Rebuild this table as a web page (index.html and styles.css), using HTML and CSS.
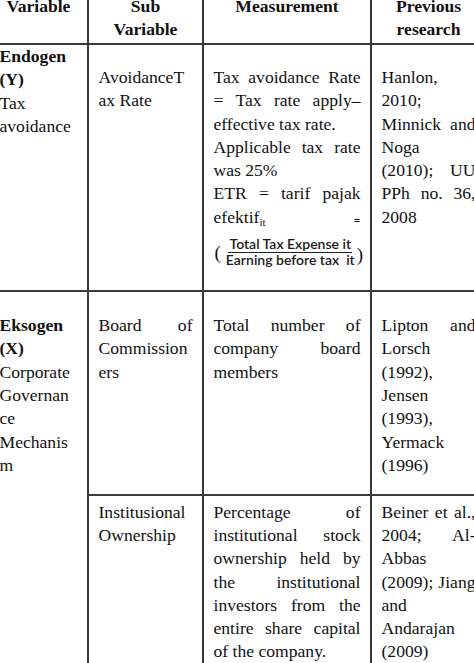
FILE: index.html
```html
<!DOCTYPE html>
<html>
<head>
<meta charset="utf-8">
<link rel="stylesheet" href="styles.css">
</head>
<body>
<table class="grid">
  <colgroup><col class="c1"><col class="c2"><col class="c3"><col class="c4"></colgroup>
  <thead>
    <tr><th>Variable</th><th>Sub<br>Variable</th><th>Measurement</th><th>Previous<br>research</th></tr>
  </thead>
  <tbody>
    <tr class="r1">
      <td class="first">
        <span class="ln b">Endogen</span>
        <span class="ln b">(Y)</span>
        <span class="ln">Tax</span>
        <span class="ln">avoidance</span>
      </td>
      <td>
        <span class="ln">AvoidanceT</span>
        <span class="ln">ax Rate</span>
      </td>
      <td class="meas">
        <span class="ln j">Tax avoidance Rate</span>
        <span class="ln j">= Tax rate apply–</span>
        <span class="ln">effective tax rate.</span>
        <span class="ln j">Applicable tax rate</span>
        <span class="ln">was 25%</span>
        <span class="ln j">ETR = tarif pajak</span>
        <span class="ln j">efektif<span class="it">it</span> <span class="eq">=</span></span>
        <span class="ln fline"><span class="par">(</span><span class="frac"><span class="num">Total Tax Expense it</span><span class="den">Earning before tax&nbsp; it</span></span><span class="par par-r">)</span></span>
      </td>
      <td>
        <span class="ln">Hanlon,</span>
        <span class="ln">2010;</span>
        <span class="ln j">Minnick and</span>
        <span class="ln">Noga</span>
        <span class="ln j">(2010); UU</span>
        <span class="ln j">PPh no. 36,</span>
        <span class="ln">2008</span>
      </td>
    </tr>
    <tr class="r2">
      <td rowspan="2">
        <span class="ln b">Eksogen</span>
        <span class="ln b">(X)</span>
        <span class="ln">Corporate</span>
        <span class="ln">Governan</span>
        <span class="ln">ce</span>
        <span class="ln">Mechanis</span>
        <span class="ln">m</span>
      </td>
      <td>
        <span class="ln j">Board of</span>
        <span class="ln">Commission</span>
        <span class="ln">ers</span>
      </td>
      <td>
        <span class="ln j">Total number of</span>
        <span class="ln j">company board</span>
        <span class="ln">members</span>
      </td>
      <td>
        <span class="ln j">Lipton and</span>
        <span class="ln">Lorsch</span>
        <span class="ln">(1992),</span>
        <span class="ln">Jensen</span>
        <span class="ln">(1993),</span>
        <span class="ln">Yermack</span>
        <span class="ln">(1996)</span>
      </td>
    </tr>
    <tr class="r3">
      <td>
        <span class="ln">Institusional</span>
        <span class="ln">Ownership</span>
      </td>
      <td>
        <span class="ln j">Percentage of</span>
        <span class="ln j">institutional stock</span>
        <span class="ln j">ownership held by</span>
        <span class="ln j">the institutional</span>
        <span class="ln j">investors from the</span>
        <span class="ln j">entire share capital</span>
        <span class="ln">of the company.</span>
      </td>
      <td>
        <span class="ln j">Beiner et al.,</span>
        <span class="ln j">2004; Al-</span>
        <span class="ln">Abbas</span>
        <span class="ln j">(2009); Jiang</span>
        <span class="ln">and</span>
        <span class="ln">Andarajan</span>
        <span class="ln">(2009)</span>
      </td>
    </tr>
  </tbody>
</table>
</body>
</html>
```

FILE: styles.css
```css
html, body {
  margin: 0;
  padding: 0;
  background: #ffffff;
  overflow: hidden;
}
body {
  width: 474px;
  height: 663px;
  font-family: "Liberation Serif", "Times New Roman", serif;
  font-size: 17.6px;
  line-height: 23.3px;
  color: #111111;
}
.grid {
  border-collapse: collapse;
  table-layout: fixed;
  width: 497px;
  margin: -7px 0 0 -12px;
}
.c1 { width: 99px; }
.c2 { width: 115px; }
.c3 { width: 168px; }
.c4 { width: 115px; }
.grid th,
.grid td {
  border: 2px solid #3a3a3a;
  padding: 0 9.5px 0 9.5px;
  vertical-align: top;
  text-align: left;
}
.grid th {
  font-weight: bold;
  text-align: center;
  padding-bottom: 1.4px;
}
.ln { display: block; white-space: nowrap; }
.b { font-weight: bold; }
.j { text-align: justify; text-align-last: justify; white-space: normal; }
.r1 td { padding-top: 21px; }
.r1 td.first { padding-top: 0; }
.r1 td.meas { padding-bottom: 24px; }
.r2 td { padding-top: 22px; padding-bottom: 17px; }
.r3 td { padding-top: 4.5px; }
.it {
  font-size: 11px;
  line-height: 0;
  vertical-align: -3px;
}
.eq {
  font-family: Lato, "Liberation Sans", sans-serif;
  font-size: 12px;
  line-height: 0;
  vertical-align: -1px;
}
.fline {
  display: flex;
  align-items: center;
  margin-top: 9px;
  height: 28px;
}
.par {
  font-size: 19px;
  line-height: 19px;
  margin-left: 1px;
}
.par-r { margin-left: 2px; position: relative; top: 2px; }
.frac {
  display: flex;
  flex-direction: column;
  align-items: center;
  margin-left: 5px;
  font-family: Lato, "Liberation Sans", sans-serif;
  font-size: 14px;
  line-height: 12.5px;
  font-weight: 600;
  color: #1a1a1a;
  white-space: nowrap;
}
.num {
  border-bottom: 1.5px solid #222222;
  padding: 0 1px 1px;
}
.den { padding-top: 1px; }
```
